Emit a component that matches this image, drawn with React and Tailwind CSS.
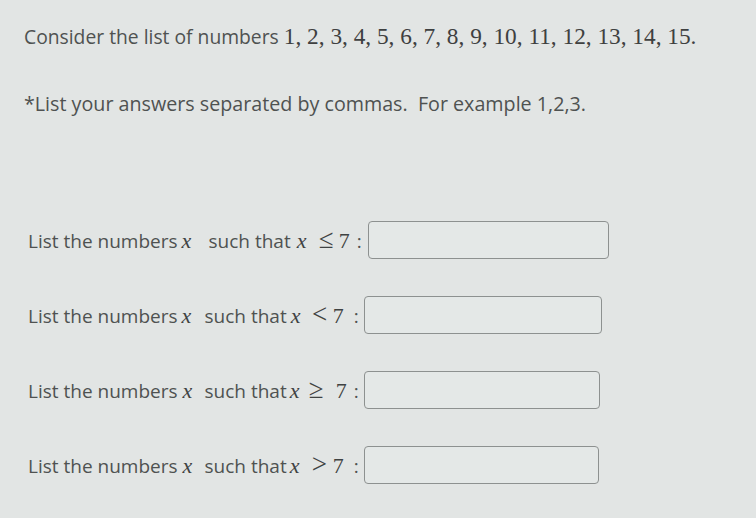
import React from "react";

const mathFont = { fontFamily: '"Liberation Serif","DejaVu Serif",serif' };

function Row({ op, s }) {
  return (
    <div className="flex items-center h-[38px]">
      <span className="whitespace-nowrap">
        <span>List the numbers</span>
        <span className={`inline-block italic text-[22px] text-[#3f4242] ${s.x1}`} style={mathFont}>x</span>
        <span className={`inline-block ${s.such}`}>such that</span>
        <span className={`inline-block italic text-[22px] text-[#3f4242] ${s.x2}`} style={mathFont}>x</span>
        <span className={`inline-block text-center text-[27px] leading-none text-[#3f4242] ${s.op}`} style={mathFont}>{op}</span>
        <span className={`inline-block text-[22px] text-[#3f4242] ${s.seven}`} style={mathFont}>7</span>
        <span className={`inline-block ${s.colon}`}>:</span>
      </span>
      <div className={`h-[38px] shrink-0 rounded-[4px] border border-[#8d9190] bg-[#e4e8e7] ${s.box}`}></div>
    </div>
  );
}

export default function App() {
  return (
    <div className="w-[756px] h-[518px] bg-[#e2e5e4] text-[#4f5251] overflow-hidden" style={{ fontFamily: '"Open Sans",sans-serif' }}>
      <div className="pt-[21px] pl-[24px] text-[19.3px] leading-[30px] whitespace-nowrap">
        Consider the list of numbers{" "}
        <span className="text-[23.3px] text-[#3e4040]" style={mathFont}>
          1, 2, 3, 4, 5, 6, 7, 8, 9, 10, 11, 12, 13, 14, 15.
        </span>
      </div>
      <div className="mt-[37px] pl-[24px] text-[19.7px] leading-[30px] whitespace-nowrap">
        *List your answers separated by commas.&nbsp; For example 1,2,3.
      </div>
      <div className="mt-[102px] pl-[28px] flex flex-col gap-[37px] text-[19px] leading-[26px]">
        <Row
          op="≤"
          s={{ x1: "ml-[4px] w-[13px]", such: "ml-[14px]", x2: "ml-[6px] w-[13px]", op: "ml-[9px] w-[15px]", seven: "ml-[5px] w-[12px]", colon: "ml-[6px]", box: "ml-[6px] w-[241px]" }}
        />
        <Row
          op="<"
          s={{ x1: "ml-[4px] w-[13px]", such: "ml-[10px]", x2: "ml-[4px] w-[13px]", op: "ml-[8px] w-[16px]", seven: "ml-[5px] w-[12px]", colon: "ml-[9px]", box: "ml-[5px] w-[238px]" }}
        />
        <Row
          op="≥"
          s={{ x1: "ml-[5px] w-[12px]", such: "ml-[10px]", x2: "ml-[3px] w-[13px]", op: "ml-[6px] w-[15px]", seven: "ml-[12px] w-[12px]", colon: "ml-[6px]", box: "ml-[5px] w-[236px]" }}
        />
        <Row
          op=">"
          s={{ x1: "ml-[5px] w-[12px]", such: "ml-[10px]", x2: "ml-[3px] w-[13px]", op: "ml-[9px] w-[14px]", seven: "ml-[7px] w-[12px]", colon: "ml-[9px]", box: "ml-[5px] w-[235px]" }}
        />
      </div>
    </div>
  );
}
